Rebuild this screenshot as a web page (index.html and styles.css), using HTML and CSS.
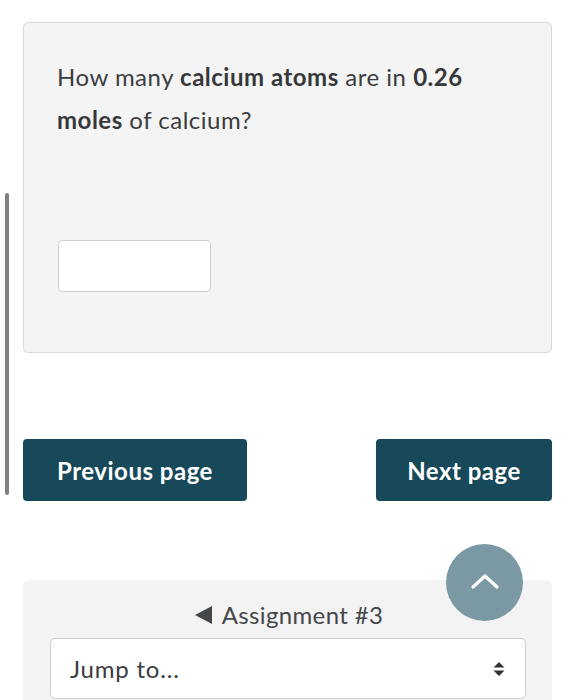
FILE: index.html
```html
<!DOCTYPE html>
<html>
<head>
<meta charset="utf-8">
<link rel="stylesheet" href="styles.css">
</head>
<body>
<div class="scrollbar"></div>
<main class="page">
  <section class="card">
    <p class="question">How many <b>calcium atoms</b> are in <b>0.26 moles</b> of calcium?</p>
    <div class="answer"></div>
  </section>
  <nav class="pager">
    <a class="btn btn-prev">Previous page</a>
    <a class="btn btn-next">Next page</a>
  </nav>
  <section class="footer-panel">
    <div class="assign"><span class="tri"></span>Assignment #3</div>
    <div class="select">
      <span>Jump to...</span>
      <svg class="updown" width="12" height="16" viewBox="0 0 12 16"><path d="M6 1 L11.5 6.5 H0.5 Z M6 15 L11.5 9.5 H0.5 Z" fill="#333"/></svg>
    </div>
  </section>
</main>
<div class="totop">
  <svg width="30" height="18" viewBox="0 0 30 18"><path d="M3 15 L15 4 L27 15" fill="none" stroke="#fff" stroke-width="3.2" stroke-linecap="round" stroke-linejoin="round"/></svg>
</div>
</body>
</html>
```
FILE: styles.css
```css
html, body {
  margin: 0;
  padding: 0;
  background: #fff;
}
body {
  font-family: Lato, "Open Sans", sans-serif;
  color: #3b3d40;
  height: 700px;
  overflow: hidden;
  position: relative;
}
.page {
  padding: 22px 17px 0 23px;
}
.card {
  box-sizing: border-box;
  height: 331px;
  border: 1px solid #d8d8d8;
  border-radius: 5px;
  background: #f4f4f4;
  padding: 32px 30px 0 33px;
}
.question {
  margin: 0;
  font-size: 24px;
  letter-spacing: 0.5px;
  line-height: 43px;
  max-width: 430px;
}
.question b {
  font-weight: 700;
  color: #36383b;
}
.answer {
  margin-top: 99px;
  margin-left: 1px;
  width: 151px;
  height: 50px;
  background: #fff;
  border: 1px solid #cfcfcf;
  border-radius: 4px;
}
.pager {
  display: flex;
  justify-content: space-between;
  margin-top: 86px;
}
.btn {
  display: flex;
  align-items: center;
  justify-content: center;
  height: 62px;
  background: #17495a;
  color: #fff;
  font-weight: 700;
  font-size: 24px;
  letter-spacing: 0.5px;
  border-radius: 4px;
}
.btn-prev { width: 224px; }
.btn-next { width: 176px; }
.footer-panel {
  margin-top: 79px;
  background: #f3f3f3;
  border-radius: 6px;
  height: 140px;
  padding: 20px 26px 0 27px;
  box-sizing: border-box;
}
.assign {
  display: flex;
  align-items: center;
  justify-content: center;
  font-size: 24px;
  letter-spacing: 0.35px;
  line-height: 30px;
  color: #44474a;
  padding-left: 2px;
}
.tri {
  width: 0;
  height: 0;
  border-top: 9px solid transparent;
  border-bottom: 9px solid transparent;
  border-right: 17px solid #44474a;
  margin-right: 10px;
}
.select {
  margin-top: 8px;
  height: 61px;
  box-sizing: border-box;
  background: #fff;
  border: 1px solid #cfcfcf;
  border-radius: 5px;
  display: flex;
  align-items: center;
  justify-content: space-between;
  padding: 0 20px 0 19px;
  font-size: 24px;
  letter-spacing: 0.8px;
  color: #3a3c3f;
}
.updown { display: block; }
.scrollbar {
  position: absolute;
  left: 5px;
  top: 193px;
  width: 4px;
  height: 302px;
  background: #7f7f7f;
  border-radius: 2px;
}
.totop {
  position: absolute;
  left: 446px;
  top: 544px;
  width: 77px;
  height: 77px;
  border-radius: 50%;
  background: #7b99a4;
  display: flex;
  align-items: center;
  justify-content: center;
}
.totop svg { margin-top: -3px; }
```
